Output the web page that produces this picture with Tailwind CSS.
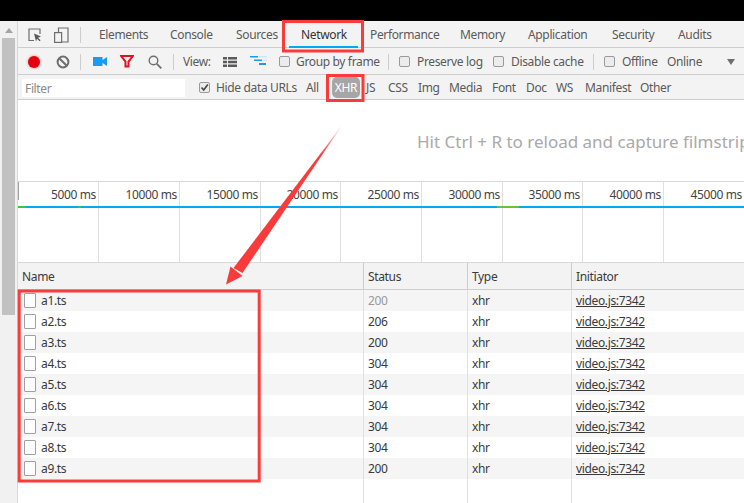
<!DOCTYPE html>
<html>
<head>
<meta charset="utf-8">
<script src="https://cdn.jsdelivr.net/npm/@tailwindcss/browser@4"></script>
</head>
<body class="m-0">
<div class="relative w-[744px] h-[503px] overflow-hidden bg-white font-['Noto_Sans',sans-serif] text-[12px] leading-[16px] tracking-[-0.35px] whitespace-nowrap text-[#303942] flex flex-col">
  <div class="h-[21px] bg-black shrink-0"></div>
  <div class="flex flex-1 min-h-0">
    <!-- scrollbar -->
    <div class="w-[18px] shrink-0 bg-[#f1f1f1] border-r border-[#d8d8d8] flex flex-col items-center">
      <svg class="mt-[7px]" width="8" height="5" viewBox="0 0 8 5"><path d="M4 0L8 5H0Z" fill="#a3a3a3"/></svg>
      <div class="mt-[5px] w-[13px] h-[277px] bg-[#c1c1c1]"></div>
    </div>
    <div class="flex-1 min-w-0 flex flex-col">
      <!-- tabs -->
      <div class="h-[27px] shrink-0 pt-[1px] bg-[#f3f3f3] border-b border-[#cdcdcd] flex items-center text-[#5a5a5a]">
        <svg class="ml-[10px]" width="14" height="14" viewBox="0 0 14 14" fill="none"><path d="M6 12.500H1V1h11v5" stroke="#6e6e6e" stroke-width="1.200"/><path d="M6 5.500l7 3-3 1.200 2.600 2.600-1 1L9 10.700l-1 2.800z" fill="#5a5a5a"/></svg>
        <svg class="ml-[12px]" width="15" height="16" viewBox="0 0 15 16" fill="none"><path d="M4.500 5V1h9.500v14H8" stroke="#6e6e6e" stroke-width="1.200"/><rect x="0.600" y="5.600" width="7" height="9.800" stroke="#6e6e6e" stroke-width="1.200"/></svg>
        <div class="ml-[11px] w-px h-[16px] bg-[#cdcdcd]"></div>
        <span class="ml-[18px] w-[47px]">Elements</span>
        <span class="ml-[24px] w-[42px]">Console</span>
        <span class="ml-[24px] w-[41px]">Sources</span>
        <div class="relative ml-[24px] w-[45px] h-full flex items-center">
          <span class="text-[#333]">Network</span>
          <div class="absolute left-[-12px] right-[-12px] bottom-[-1px] h-[2px] bg-[#03a9f4]"></div>
        </div>
        <span class="ml-[24px] w-[66px]">Performance</span>
        <span class="ml-[24px] w-[44px]">Memory</span>
        <span class="ml-[24px] w-[60px]">Application</span>
        <span class="ml-[24px] w-[41px]">Security</span>
        <span class="ml-[25px] w-[33px]">Audits</span>
      </div>
      <!-- controls -->
      <div class="h-[27px] shrink-0 pt-[1px] bg-[#f3f3f3] border-b border-[#cdcdcd] flex items-center text-[#5a5a5a]">
        <div class="ml-[10px] w-[12px] h-[12px] rounded-full bg-[#e5000f] shadow-[0_0_3px_#f08080]"></div>
        <svg class="ml-[16px]" width="14" height="14" viewBox="0 0 14 14" fill="none"><circle cx="7" cy="7" r="5.400" stroke="#6e6e6e" stroke-width="2"/><path d="M3.200 3.200l7.600 7.600" stroke="#6e6e6e" stroke-width="2"/></svg>
        <div class="ml-[10px] w-px h-[16px] bg-[#cdcdcd]"></div>
        <svg class="ml-[12px]" width="14" height="9" viewBox="0 0 14 9"><path d="M0 0H9.500V3L14 0V9L9.500 6V9H0Z" fill="#1a9bf0"/></svg>
        <svg class="ml-[13px]" width="14" height="13" viewBox="0 0 14 13" fill="none"><path d="M1 1H13L8.500 6.500V11.500H5.500V6.500Z" stroke="#e5101f" stroke-width="2"/></svg>
        <svg class="ml-[14px]" width="14" height="14" viewBox="0 0 14 14" fill="none"><circle cx="5.500" cy="5.500" r="4.300" stroke="#6e6e6e" stroke-width="1.400"/><path d="M8.800 8.800L13.300 13.300" stroke="#6e6e6e" stroke-width="1.800"/></svg>
        <div class="ml-[11px] w-px h-[16px] bg-[#cdcdcd]"></div>
        <span class="ml-[9px] w-[28px]">View:</span>
        <svg class="ml-[12px]" width="14" height="10" viewBox="0 0 14 10"><path d="M0 0h4v2.500H0zM5 0h9v2.500H5zM0 3.700h4v2.500H0zM5 3.700h9v2.500H5zM0 7.500h4V10H0zM5 7.500h9V10H5z" fill="#5a5a5a"/></svg>
        <svg class="ml-[13px]" width="17" height="11" viewBox="0 0 17 11"><path d="M0 0h8v1.500H0zM4 3.500h8V5H4zM9 7h7v2H9z" fill="#1a9bf0"/><path d="M9 0h8v1.500H9zM13 3.500h4V5h-4z" fill="#cfe6f7"/></svg>
        <div class="ml-[12px] w-[11px] h-[11px] rounded-[2px] border border-[#9a9a9a] bg-[#ececec]"></div>
        <span class="ml-[6px] w-[83px]">Group by frame</span>
        <div class="ml-[9px] w-px h-[16px] bg-[#cdcdcd]"></div>
        <div class="ml-[10px] w-[11px] h-[11px] rounded-[2px] border border-[#9a9a9a] bg-[#ececec]"></div>
        <span class="ml-[7px] w-[65px]">Preserve log</span>
        <div class="ml-[11px] w-[11px] h-[11px] rounded-[2px] border border-[#9a9a9a] bg-[#ececec]"></div>
        <span class="ml-[7px] w-[72px]">Disable cache</span>
        <div class="ml-[10px] w-px h-[16px] bg-[#cdcdcd]"></div>
        <div class="ml-[10px] w-[11px] h-[11px] rounded-[2px] border border-[#9a9a9a] bg-[#ececec]"></div>
        <span class="ml-[7px] w-[35px]">Offline</span>
        <span class="ml-[10px] w-[34px]">Online</span>
        <svg class="ml-[26px]" width="8" height="6" viewBox="0 0 8 6"><path d="M0 0H8L4 6Z" fill="#6e6e6e"/></svg>
      </div>
      <!-- filter -->
      <div class="h-[25px] shrink-0 pt-[1px] bg-[#f3f3f3] border-b border-[#cdcdcd] flex items-center text-[#5a5a5a]">
        <div class="ml-[4px] w-[163px] h-[18px] bg-white pl-[3px] leading-[20px] text-[#8a8a8a]">Filter</div>
        <div class="ml-[14px] w-[11px] h-[11px] rounded-[2px] border border-[#9a9a9a] bg-[#ececec] flex items-center justify-center"><svg width="9" height="9" viewBox="0 0 9 9" fill="none"><path d="M1.500 4.500L3.700 7L7.800 1.500" stroke="#444" stroke-width="1.600"/></svg></div>
        <span class="ml-[6px] w-[81px]">Hide data URLs</span>
        <span class="ml-[9px] w-[13px]">All</span>
        <span class="ml-[13px] w-[28px] h-[21px] rounded-[5px] bg-[#a6a6a6] text-white text-center leading-[21px]">XHR</span>
        <span class="ml-[6px] w-[13px]">JS</span>
        <span class="ml-[9px] w-[21px]">CSS</span>
        <span class="ml-[9px] w-[21px]">Img</span>
        <span class="ml-[10px] w-[32px]">Media</span>
        <span class="ml-[11px] w-[24px]">Font</span>
        <span class="ml-[10px] w-[20px]">Doc</span>
        <span class="ml-[10px] w-[19px]">WS</span>
        <span class="ml-[10px] w-[45px]">Manifest</span>
        <span class="ml-[10px] w-[30px]">Other</span>
      </div>
      <!-- filmstrip message -->
      <div class="h-[81px] shrink-0 flex items-center pl-[399px] pt-[3px] text-[17px] tracking-normal text-[#a9a9a9]">Hit Ctrl + R to reload and capture filmstrip.</div>
      <!-- timeline -->
      <div class="relative h-[82px] shrink-0 border-t border-b border-[#d8d8d8] grid grid-cols-[81px_81px_81px_80px_81px_81px_80px_81px_1fr] text-[#444]">
        <div class="h-full text-right pr-[2px] pt-[5px] border-r border-[#e0e0e0]">5000 ms</div>
        <div class="h-full text-right pr-[2px] pt-[5px] border-r border-[#e0e0e0]">10000 ms</div>
        <div class="h-full text-right pr-[2px] pt-[5px] border-r border-[#e0e0e0]">15000 ms</div>
        <div class="h-full text-right pr-[2px] pt-[5px] border-r border-[#e0e0e0]">20000 ms</div>
        <div class="h-full text-right pr-[2px] pt-[5px] border-r border-[#e0e0e0]">25000 ms</div>
        <div class="h-full text-right pr-[2px] pt-[5px] border-r border-[#e0e0e0]">30000 ms</div>
        <div class="h-full text-right pr-[2px] pt-[5px] border-r border-[#e0e0e0]">35000 ms</div>
        <div class="h-full text-right pr-[2px] pt-[5px] border-r border-[#e0e0e0]">40000 ms</div>
        <div class="h-full text-right pr-[2px] pt-[5px]">45000 ms</div>
        <div class="absolute left-0 top-0 w-[1px] h-[18px] bg-[#a0a0a0]"></div>
        <div class="absolute left-0 right-0 top-[24px] h-[2px] bg-[#03a9f4]"></div>
        <div class="absolute left-0 top-[24px] w-[8px] h-[2px] bg-[#2ecc40]"></div>
        <div class="absolute left-[60px] top-[24px] w-[3px] h-[2px] bg-[#2ecc40]"></div>
        <div class="absolute left-[479px] top-[24px] w-[22px] h-[2px] bg-[#6bbf3f]"></div>
      </div>
      <!-- table -->
      <div class="flex-1 min-h-0 grid grid-cols-[346px_104px_104px_1fr] grid-rows-[27px_repeat(9,21px)_1fr] text-[#3a3a3a]">
        <div class="bg-[#f3f3f3] border-b border-r border-[#cdcdcd] pl-[4px] leading-[28px]">Name</div>
        <div class="bg-[#f3f3f3] border-b border-r border-[#cdcdcd] pl-[4px] leading-[28px]">Status</div>
        <div class="bg-[#f3f3f3] border-b border-r border-[#cdcdcd] pl-[4px] leading-[28px]">Type</div>
        <div class="bg-[#f3f3f3] border-b border-[#cdcdcd] pl-[4px] leading-[28px]">Initiator</div>

        <div class="bg-[#f5f5f5] border-r border-[#e0e0e0] flex items-center pl-[6px] gap-[5px]"><span class="w-[12px] h-[15px] bg-white border border-[#a0a0a0] rounded-[1px]"></span>a1.ts</div>
        <div class="bg-[#f5f5f5] border-r border-[#e0e0e0] pl-[4px] leading-[21px] text-[#999]">200</div>
        <div class="bg-[#f5f5f5] border-r border-[#e0e0e0] pl-[4px] leading-[21px]">xhr</div>
        <div class="bg-[#f5f5f5] pl-[4px] leading-[21px]"><span class="underline">video.js:7342</span></div>

        <div class="border-r border-[#e0e0e0] flex items-center pl-[6px] gap-[5px]"><span class="w-[12px] h-[15px] bg-white border border-[#a0a0a0] rounded-[1px]"></span>a2.ts</div>
        <div class="border-r border-[#e0e0e0] pl-[4px] leading-[21px]">206</div>
        <div class="border-r border-[#e0e0e0] pl-[4px] leading-[21px]">xhr</div>
        <div class="pl-[4px] leading-[21px]"><span class="underline">video.js:7342</span></div>

        <div class="bg-[#f5f5f5] border-r border-[#e0e0e0] flex items-center pl-[6px] gap-[5px]"><span class="w-[12px] h-[15px] bg-white border border-[#a0a0a0] rounded-[1px]"></span>a3.ts</div>
        <div class="bg-[#f5f5f5] border-r border-[#e0e0e0] pl-[4px] leading-[21px]">200</div>
        <div class="bg-[#f5f5f5] border-r border-[#e0e0e0] pl-[4px] leading-[21px]">xhr</div>
        <div class="bg-[#f5f5f5] pl-[4px] leading-[21px]"><span class="underline">video.js:7342</span></div>

        <div class="border-r border-[#e0e0e0] flex items-center pl-[6px] gap-[5px]"><span class="w-[12px] h-[15px] bg-white border border-[#a0a0a0] rounded-[1px]"></span>a4.ts</div>
        <div class="border-r border-[#e0e0e0] pl-[4px] leading-[21px]">304</div>
        <div class="border-r border-[#e0e0e0] pl-[4px] leading-[21px]">xhr</div>
        <div class="pl-[4px] leading-[21px]"><span class="underline">video.js:7342</span></div>

        <div class="bg-[#f5f5f5] border-r border-[#e0e0e0] flex items-center pl-[6px] gap-[5px]"><span class="w-[12px] h-[15px] bg-white border border-[#a0a0a0] rounded-[1px]"></span>a5.ts</div>
        <div class="bg-[#f5f5f5] border-r border-[#e0e0e0] pl-[4px] leading-[21px]">304</div>
        <div class="bg-[#f5f5f5] border-r border-[#e0e0e0] pl-[4px] leading-[21px]">xhr</div>
        <div class="bg-[#f5f5f5] pl-[4px] leading-[21px]"><span class="underline">video.js:7342</span></div>

        <div class="border-r border-[#e0e0e0] flex items-center pl-[6px] gap-[5px]"><span class="w-[12px] h-[15px] bg-white border border-[#a0a0a0] rounded-[1px]"></span>a6.ts</div>
        <div class="border-r border-[#e0e0e0] pl-[4px] leading-[21px]">304</div>
        <div class="border-r border-[#e0e0e0] pl-[4px] leading-[21px]">xhr</div>
        <div class="pl-[4px] leading-[21px]"><span class="underline">video.js:7342</span></div>

        <div class="bg-[#f5f5f5] border-r border-[#e0e0e0] flex items-center pl-[6px] gap-[5px]"><span class="w-[12px] h-[15px] bg-white border border-[#a0a0a0] rounded-[1px]"></span>a7.ts</div>
        <div class="bg-[#f5f5f5] border-r border-[#e0e0e0] pl-[4px] leading-[21px]">304</div>
        <div class="bg-[#f5f5f5] border-r border-[#e0e0e0] pl-[4px] leading-[21px]">xhr</div>
        <div class="bg-[#f5f5f5] pl-[4px] leading-[21px]"><span class="underline">video.js:7342</span></div>

        <div class="border-r border-[#e0e0e0] flex items-center pl-[6px] gap-[5px]"><span class="w-[12px] h-[15px] bg-white border border-[#a0a0a0] rounded-[1px]"></span>a8.ts</div>
        <div class="border-r border-[#e0e0e0] pl-[4px] leading-[21px]">304</div>
        <div class="border-r border-[#e0e0e0] pl-[4px] leading-[21px]">xhr</div>
        <div class="pl-[4px] leading-[21px]"><span class="underline">video.js:7342</span></div>

        <div class="bg-[#f5f5f5] border-r border-[#e0e0e0] flex items-center pl-[6px] gap-[5px]"><span class="w-[12px] h-[15px] bg-white border border-[#a0a0a0] rounded-[1px]"></span>a9.ts</div>
        <div class="bg-[#f5f5f5] border-r border-[#e0e0e0] pl-[4px] leading-[21px]">200</div>
        <div class="bg-[#f5f5f5] border-r border-[#e0e0e0] pl-[4px] leading-[21px]">xhr</div>
        <div class="bg-[#f5f5f5] pl-[4px] leading-[21px]"><span class="underline">video.js:7342</span></div>

        <div class="border-r border-[#e0e0e0]"></div>
        <div class="border-r border-[#e0e0e0]"></div>
        <div class="border-r border-[#e0e0e0]"></div>
        <div></div>
      </div>
    </div>
  </div>
  <!-- annotation overlay -->
  <svg class="absolute left-0 top-0 pointer-events-none" width="744" height="503" viewBox="0 0 744 503" fill="none">
    <rect x="283.500" y="21.500" width="79" height="29.500" stroke="#f93b3b" stroke-width="3"/>
    <rect x="327.500" y="75.500" width="35.500" height="25" stroke="#f93b3b" stroke-width="3"/>
    <rect x="19.200" y="291" width="240" height="190" stroke="#f93b3b" stroke-width="3"/>
    <defs><linearGradient id="tail" gradientUnits="userSpaceOnUse" x1="343" y1="124" x2="320" y2="155"><stop offset="0" stop-color="#f93b3b" stop-opacity="0.1"/><stop offset="1" stop-color="#f93b3b"/></linearGradient></defs>
    <path d="M343 124 L242.500 273 L233.500 268 Z" fill="url(#tail)"/>
    <path d="M226 284.500 L230.500 266.500 L242.500 276 Z" fill="#f93b3b"/>
  </svg>
</div>
</body>
</html>
